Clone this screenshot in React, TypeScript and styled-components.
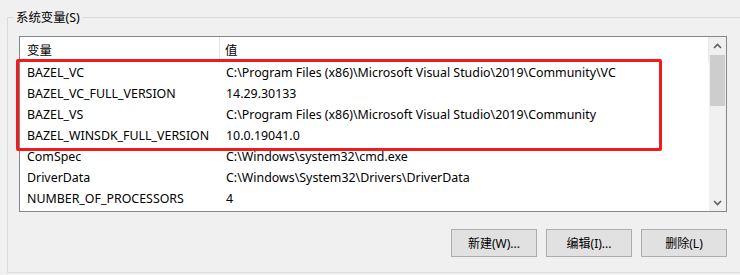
import styled, { createGlobalStyle } from "styled-components";

const GlobalStyle = createGlobalStyle`
  html, body {
    margin: 0;
    padding: 0;
    background: #f0f0f0;
  }
  body {
    font-family: "Noto Sans", "Noto Sans CJK SC", sans-serif;
    font-size: 12.4px;
    color: #000;
  }
`;

const rows = [
  { name: "BAZEL_VC", value: "C:\\Program Files (x86)\\Microsoft Visual Studio\\2019\\Community\\VC" },
  { name: "BAZEL_VC_FULL_VERSION", value: "14.29.30133" },
  { name: "BAZEL_VS", value: "C:\\Program Files (x86)\\Microsoft Visual Studio\\2019\\Community" },
  { name: "BAZEL_WINSDK_FULL_VERSION", value: "10.0.19041.0" },
  { name: "ComSpec", value: "C:\\Windows\\system32\\cmd.exe" },
  { name: "DriverData", value: "C:\\Windows\\System32\\Drivers\\DriverData" },
  { name: "NUMBER_OF_PROCESSORS", value: "4" },
];

function App() {
  return (
    <>
      <GlobalStyle />
      <Page>
        <GroupBox>
          <Legend>系统变量(S)</Legend>
          <ListBox>
            <Table>
              <HeaderRow>
                <HeaderCell $first>变量</HeaderCell>
                <HeaderCell>值</HeaderCell>
              </HeaderRow>
              {rows.map((r) => (
                <Row key={r.name}>
                  <NameCell>{r.name}</NameCell>
                  <ValueCell>{r.value}</ValueCell>
                </Row>
              ))}
            </Table>
            <ScrollBar>
              <ArrowButton>
                <svg width="9" height="6" viewBox="0 0 9 6">
                  <polyline points="1,5 4.5,1.5 8,5" fill="none" stroke="#606060" strokeWidth="1.6" />
                </svg>
              </ArrowButton>
              <Track>
                <Thumb />
              </Track>
              <ArrowButton>
                <svg width="9" height="6" viewBox="0 0 9 6">
                  <polyline points="1,1 4.5,4.5 8,1" fill="none" stroke="#606060" strokeWidth="1.6" />
                </svg>
              </ArrowButton>
            </ScrollBar>
            <Highlight />
          </ListBox>
          <ButtonRow>
            <Button>新建(W)...</Button>
            <Button>编辑(I)...</Button>
            <Button>删除(L)</Button>
          </ButtonRow>
        </GroupBox>
      </Page>
    </>
  );
}

const Page = styled.div`
  padding: 17px 2px 2px 7px;
`;

const GroupBox = styled.div`
  position: relative;
  width: 729px;
  border: 1px solid #dcdcdc;
  padding: 18px 0 15px 11px;
`;

const Legend = styled.div`
  position: absolute;
  top: -9px;
  left: 6px;
  padding: 0 2px;
  background: #f0f0f0;
  line-height: 18px;
`;

const ListBox = styled.div`
  position: relative;
  display: flex;
  width: 706px;
  height: 174px;
  border: 1px solid #828790;
  background: #fff;
`;

const Table = styled.div`
  flex: 1;
  display: flex;
  flex-direction: column;
`;

const HeaderRow = styled.div`
  display: grid;
  grid-template-columns: 200px 1fr;
  height: 25px;
  border-right: 1px solid #e5e5e5;
`;

const HeaderCell = styled.div<{ $first?: boolean }>`
  display: flex;
  align-items: center;
  padding-left: ${(p) => (p.$first ? "7px" : "5px")};
  border-right: ${(p) => (p.$first ? "1px solid #e5e5e5" : "none")};
`;

const Row = styled.div`
  display: grid;
  grid-template-columns: 200px 1fr;
  height: 21px;
  align-items: center;
`;

const NameCell = styled.div`
  padding-left: 7px;
  white-space: nowrap;
`;

const ValueCell = styled.div`
  padding-left: 6px;
  white-space: nowrap;
`;

const ScrollBar = styled.div`
  width: 17px;
  display: flex;
  flex-direction: column;
  background: #f0f0f0;
`;

const ArrowButton = styled.div`
  height: 17px;
  display: flex;
  align-items: center;
  justify-content: center;
`;

const Track = styled.div`
  flex: 1;
  padding: 1px 1px;
`;

const Thumb = styled.div`
  height: 51px;
  background: #cdcdcd;
`;

const Highlight = styled.div`
  position: absolute;
  left: -4px;
  top: 22px;
  width: 640px;
  height: 86px;
  border: 3px solid #f21b1b;
  border-radius: 2px;
  pointer-events: none;
`;

const ButtonRow = styled.div`
  display: flex;
  justify-content: flex-end;
  gap: 9px;
  width: 708px;
  margin-top: 17px;
`;

const Button = styled.button`
  width: 86px;
  height: 28px;
  border: 1px solid #adadad;
  background: #e1e1e1;
  font-family: "Noto Sans", "Noto Sans CJK SC", sans-serif;
  font-size: 12px;
  color: #000;
  padding: 0;
`;

export default App;
